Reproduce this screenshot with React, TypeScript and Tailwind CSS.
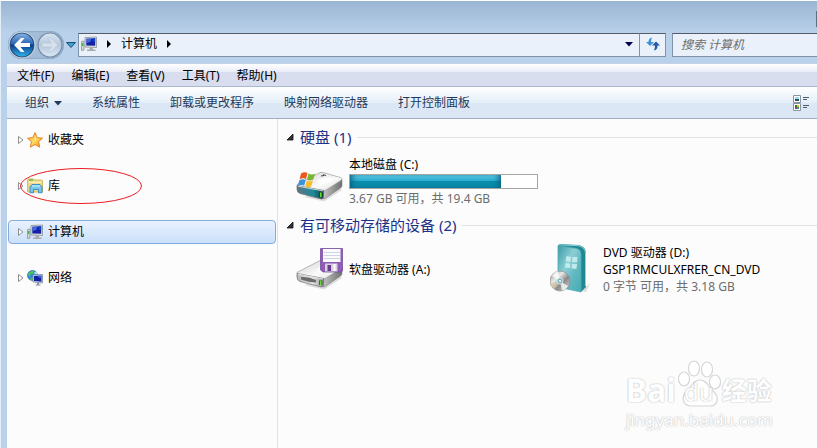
import type { ReactNode } from 'react';

const CARET = 'h-2 w-2 shrink-0';

function DownCaret({ color = '#1e395b' }: { color?: string }) {
  return (
    <svg viewBox="0 0 8 8" className={CARET} aria-hidden="true">
      <path d="M0 2h8L4 6.500z" fill={color} />
    </svg>
  );
}

function RightCaret() {
  return (
    <svg viewBox="0 0 8 8" className={CARET} aria-hidden="true">
      <path d="M2 0v8l4-4z" fill="#000" />
    </svg>
  );
}

function ComputerIcon() {
  return (
    <svg viewBox="0 0 16 16" className="h-4 w-4 shrink-0" aria-hidden="true">
      <path d="M.5 5.500 3 5v9l-2.500.5z" fill="#d4d8da" stroke="#8b9296" strokeWidth=".8" />
      <path d="M1.700 7v3" stroke="#35b233" strokeWidth="1.200" />
      <path d="M4 1.500 15.500 1v10.500L4 11z" fill="#dfe2e4" stroke="#92989d" strokeWidth=".9" />
      <path d="M5.300 2.700 14.200 2.200v7.600L5.300 9.400z" fill="#1421a6" />
      <path d="m5.300 2.700 5-.3-1 3.600-4 1z" fill="#4467dd" />
      <path d="M11.500 2.300h2.700v4L11.500 5z" fill="#0b44ce" />
      <path d="M8.500 11.500h3.500v2h2.500v1.500H6v-1.500h2.500z" fill="#a7abae" />
    </svg>
  );
}

function StarIcon() {
  return (
    <svg viewBox="0 0 16 16" className="h-4 w-4 shrink-0" aria-hidden="true">
      <defs>
        <linearGradient id="star" x1="0" y1="0" x2="1" y2="1">
          <stop offset="0" stopColor="#ffa52e" />
          <stop offset=".5" stopColor="#ffdb66" />
          <stop offset="1" stopColor="#f28a13" />
        </linearGradient>
      </defs>
      <path d="m8 .6 2.200 5 5.300.6-3.900 3.500 1.200 5.500L8 12.500 3.300 15.200l1.200-5.500L.5 6.200l5.300-.6z" fill="url(#star)" stroke="#e27a17" strokeWidth=".9" strokeLinejoin="round" />
      <path d="m8 3.500 1.300 3.200L8 9z" fill="#fff2b0" />
    </svg>
  );
}

function LibraryIcon() {
  return (
    <svg viewBox="0 0 16 16" className="h-4 w-4 shrink-0" aria-hidden="true">
      <path d="M.6 14V1.800L1.500 1h5l1 1h7l1 1v11z" fill="#f0da86" stroke="#cdb355" strokeWidth=".9" />
      <path d="M2 2h4" stroke="#4bb946" strokeWidth="1.200" />
      <path d="M1.500 4.300h13" stroke="#fff6cd" />
      <path d="M3 14.800V9l2-2.500h8L15 9v5.800h-3.500V11.500h-5v3.300z" fill="#76c6ed" stroke="#318bc3" strokeWidth=".9" />
      <path d="M5 8h8" stroke="#d6f3ff" />
    </svg>
  );
}

function NetworkIcon() {
  return (
    <svg viewBox="0 0 16 16" className="h-4 w-4 shrink-0" aria-hidden="true">
      <circle cx="5.500" cy="5.500" r="5" fill="#2c8fd8" stroke="#2a70ad" strokeWidth=".7" />
      <path d="M1 4.500C2 1.500 5 .5 7.500 1L6 3.500 3.500 4 3 7zM3 8l3 .5V10.500C4.500 10.500 3 9.500 3 8z" fill="#56c544" />
      <path d="M7 2.500 9.500 2l1 2h-3z" fill="#b8e8f9" />
      <path d="M6 5 15.500 4.500v8.500L6 12z" fill="#dde5ed" stroke="#77879d" strokeWidth=".8" />
      <path d="m7 6 7.500-.5v6.200L7 11z" fill="#1420a5" />
      <path d="M11 5.800h3.500v2.800L11 7z" fill="#3c66de" />
      <path d="M10 13h2v1.500h1.500v1H8.500v-1H10z" fill="#88949d" />
    </svg>
  );
}

function DriveBody({ tone }: { tone: 'teal' | 'grey' }) {
  const teal = tone === 'teal';
  return (
    <>
      <defs>
        <linearGradient id={`side-${tone}`} x1="0" y1="0" x2="1" y2="0">
          <stop offset="0" stopColor="#c4c4c4" />
          <stop offset=".4" stopColor="#a2a2a2" />
          <stop offset="1" stopColor="#6f6f6f" />
        </linearGradient>
        <linearGradient id={`front-${tone}`} x1="0" y1="0" x2="1" y2="0">
          <stop offset="0" stopColor={teal ? '#5d7580' : '#b5b5b5'} />
          <stop offset=".6" stopColor={teal ? '#1f8b9b' : '#e6e6e6'} />
          <stop offset="1" stopColor={teal ? '#123e46' : '#8f8f8f'} />
        </linearGradient>
        <linearGradient id={`top-${tone}`} x1="0" y1="0" x2="1" y2="1">
          <stop offset="0" stopColor="#d2d2d2" />
          <stop offset=".6" stopColor="#fafafa" />
          <stop offset="1" stopColor="#dedede" />
        </linearGradient>
      </defs>
      <path d="M8 37 28 41.500 46 30l-2-3z" fill="#000" opacity=".12" />
      <path d="M28 30.500 46 19.500v6q0 1.500-1.500 2.500L29 38.500l-2 .5z" fill={`url(#side-${tone})`} stroke="#808080" strokeWidth=".6" />
      <path d="M1 24.500 23 13q2-1 4-.5l17.500 5q2 .7 1 2.500L30 30q-1.500 1-3.500.5L2 26q-1.500-.5-1-1.500z" fill={`url(#top-${tone})`} stroke="#9d9d9d" strokeWidth=".7" />
      <path d="M20 22q9-7 18-3-7 6-14 5z" fill="#fff" opacity=".8" />
      <path d="M1 25.500 27.500 30.500v6q0 2.500-2 2.500L4 33.500Q1 32.500 1 29z" fill={`url(#front-${tone})`} stroke="#6f6f6f" strokeWidth=".7" />
      <path d="m2 26.200 25 4.700" stroke="#f4f4f4" strokeWidth=".8" />
      <path d="M24.800 32.500v4.500" stroke="#243a1c" strokeWidth="3" />
      <path d="M24.800 32.500v4.500" stroke="#62e02f" strokeWidth="1.600" />
    </>
  );
}

function HardDiskIcon() {
  return (
    <svg viewBox="0 0 48 42" className="h-[42px] w-12" aria-hidden="true">
      <DriveBody tone="teal" />
      <path d="m25 16 3-.5M27 14.700l3 .8" stroke="#444" />
      <path d="M5 13.500q3.500-2 6.500-.5l-1.500 6q-3.500-1.500-6.500.5z" fill="#e9581f" />
      <path d="M12.500 13.500q3 2 6.500.3l-1.700 5.800q-3 1.700-6.300-.1z" fill="#7ab52f" />
      <path d="M3.200 20.500q3-2 6.500-.5l-1.500 5.500Q5 24.300 1.700 26z" fill="#3b94da" />
      <path d="M10.800 20.500q3 1.700 6.200 0l-1.700 5.800q-3 1.700-6 0z" fill="#fbbd2b" />
    </svg>
  );
}

function FloppyIcon() {
  return (
    <svg viewBox="0 0 48 42" className="h-[42px] w-12" aria-hidden="true">
      <DriveBody tone="grey" />
      <path d="M5 29q8-.5 15 3v2.500Q13 34.500 5 31.500z" fill="#6b6b6b" />
      <path d="M24.500 .5h22V23l-1.500 1H27l-2.500-2z" fill="#8f5cb8" stroke="#6c4494" strokeWidth=".7" />
      <path d="M27 1h17.500v13H27z" fill="#fbfbff" />
      <path d="M27.500 4.500h16.500M27.500 7.500h16.500M27.500 10.500h16.500" stroke="#c5c9da" strokeWidth=".8" />
      <path d="M29 15.500h12.500V23.500H29z" fill="#d7d1de" />
      <path d="M31.500 17h3.500v6h-3.500z" fill="#6a3d90" />
      <path d="M38.500 16v7" stroke="#fff" strokeWidth="2" />
    </svg>
  );
}

function DvdIcon() {
  return (
    <svg viewBox="0 0 40 50" className="h-[50px] w-10" aria-hidden="true">
      <defs>
        <linearGradient id="case" x1="0" y1="0" x2="1" y2="1">
          <stop offset="0" stopColor="#3b9aa8" />
          <stop offset=".4" stopColor="#8bcfd5" />
          <stop offset=".65" stopColor="#62b9c1" />
          <stop offset="1" stopColor="#45abb3" />
        </linearGradient>
        <linearGradient id="disc" x1="0" y1="0" x2="1" y2="1">
          <stop offset="0" stopColor="#8d8d8d" />
          <stop offset=".35" stopColor="#e9e9e9" />
          <stop offset=".6" stopColor="#8a8a8a" />
          <stop offset="1" stopColor="#dcdcdc" />
        </linearGradient>
      </defs>
      <path d="m32 47 8-8-4 9z" fill="#bbb" opacity=".5" />
      <path d="m9 0 20 1q7 2 7 8v34l-5 5V9L8 3z" fill="#1e8792" />
      <path d="m8 1.500 19 3q4 1 4 6V48L8 43z" fill="url(#case)" stroke="#4ba9b4" strokeWidth=".8" />
      <path d="m9 .8 20 1q6 2 6.500 7V42" fill="none" stroke="#8fd2d9" />
      <path d="m16.500 12 4.500 1-.5 5-5-.5zM22.500 13h5l-.5 5.500-5-.3zM15.500 19l5 .5-.5 4.500-5-.5zM22 19.800l5 .3-.5 5-5-.5z" fill="#c9eef1" opacity=".9" />
      <circle cx="10" cy="37" r="10" fill="url(#disc)" stroke="#8c8c8c" strokeWidth=".7" />
      <path d="m10 37-8-5q2-4 6-5z" fill="#fff" opacity=".75" />
      <path d="m10 37 8 5q-2 4-6 4.500z" fill="#fff" opacity=".75" />
      <path d="m10 37-9.500 2q1 5 4 6.500z" fill="#d9c9a4" opacity=".6" />
      <circle cx="10" cy="37" r="3" fill="#6dbac3" stroke="#ddd" />
      <circle cx="10" cy="37" r="1" fill="#fff" />
    </svg>
  );
}

function HistoryButtons() {
  return (
    <div className="flex h-7 items-center rounded-full bg-[#a3bdd8] shadow-[inset_0_0_2px_#63809f]">
      <button aria-label="后退" className="flex h-7 w-7 items-center justify-center">
        <svg viewBox="0 0 28 28" className="h-7 w-7" aria-hidden="true">
          <defs>
            <linearGradient id="back" x1="0" y1="0" x2="0" y2="1">
              <stop offset="0" stopColor="#8ab5e4" />
              <stop offset=".45" stopColor="#2c66b5" />
              <stop offset=".5" stopColor="#0b3a8c" />
              <stop offset="1" stopColor="#31b7ed" />
            </linearGradient>
          </defs>
          <circle cx="14" cy="14" r="12" fill="url(#back)" stroke="#2b4a78" strokeWidth="1.200" />
          <circle cx="14" cy="14" r="13" fill="none" stroke="#dbe8f5" strokeWidth=".7" />
          <path d="m6 14 7-7h3.500l-4 5H22v4h-9.500l4 5H13z" fill="#fff" />
        </svg>
      </button>
      <button aria-label="前进" className="flex h-7 w-7 items-center justify-center">
        <svg viewBox="0 0 28 28" className="h-7 w-7" aria-hidden="true">
          <defs>
            <linearGradient id="forward" x1="0" y1="0" x2="0" y2="1">
              <stop offset="0" stopColor="#dae6f2" />
              <stop offset=".5" stopColor="#b5c8dc" />
              <stop offset="1" stopColor="#dbe8f5" />
            </linearGradient>
          </defs>
          <circle cx="14" cy="14" r="12" fill="url(#forward)" stroke="#758ba5" strokeWidth="1.200" />
          <path d="m22 14-7-7h-3.500l4 5H6v4h9.500l-4 5H15z" fill="#d5e0ec" stroke="#b4c5d7" strokeWidth=".6" />
        </svg>
      </button>
    </div>
  );
}

const FIELD = 'flex h-6 items-center border border-[#8193a8] border-t-[#545c6a] bg-[#eaf1fa] pb-0.5';

function NavigationBar() {
  return (
    <div className="flex h-9 items-center pl-px">
      <HistoryButtons />
      <button aria-label="最近浏览的位置" className="flex h-6 w-3.5 items-center justify-center">
        <svg viewBox="0 0 10 6" className="h-1.5 w-2.5" aria-hidden="true">
          <path d="M.5.500h9L5 5.500z" fill="#3ba2cf" stroke="#1c4d79" />
        </svg>
      </button>
      <nav aria-label="地址" className={`${FIELD} min-w-0 flex-1 gap-2 pl-0.5`}>
        <ComputerIcon />
        <RightCaret />
        <button className="whitespace-nowrap">计算机</button>
        <RightCaret />
        <button aria-label="以前的位置" className="mr-1.5 ml-auto">
          <DownCaret color="#00004c" />
        </button>
      </nav>
      <button aria-label="刷新" className={`${FIELD} w-[26px] justify-center border-l-0`}>
        <svg viewBox="0 0 16 14" className="h-3.5 w-4" aria-hidden="true">
          <path d="M7 .5Q3.500 1 3.500 5H1l4 4 4-4H6q0-3 1-4.500z" fill="#3c94d8" />
          <path d="M9 13.500q3.500-.5 3.500-5H15l-4-4-4 4h3q0 3-1 5z" fill="#2358ac" />
        </svg>
      </button>
      <input
        type="search"
        aria-label="搜索 计算机"
        placeholder="搜索 计算机"
        className={`${FIELD} ml-1.5 w-[145px] border-r-0 pl-2 italic outline-none placeholder:text-[#6d6d6d]`}
      />
    </div>
  );
}

const MENUS = ['文件(F)', '编辑(E)', '查看(V)', '工具(T)', '帮助(H)'];
const COMMANDS = ['系统属性', '卸载或更改程序', '映射网络驱动器', '打开控制面板'];

function Toolbar() {
  return (
    <div className="flex h-8 items-center gap-[30px] border-b border-[#a0afc3] bg-linear-to-b from-white from-0% via-[#e5eff9] via-50% to-[#dce7f5] to-50% pr-2 pl-[18px] whitespace-nowrap text-[#1e395b]">
      <button className="flex items-center gap-[5px]">
        组织
        <DownCaret />
      </button>
      {COMMANDS.map((name) => (
        <button key={name}>{name}</button>
      ))}
      <button aria-label="更改您的视图" className="ml-auto">
        <svg viewBox="0 0 16 16" className="h-4 w-4" aria-hidden="true">
          <path d="M.5.500h7v7h-7zM.5 8.500h7v7h-7z" fill="#fff" stroke="#8994a3" />
          <path d="M2 2h4v2H2z" fill="#9edaf0" />
          <path d="M2 4h4v2H2z" fill="#24565a" />
          <path d="M2 10h2v2H2z" fill="#397c37" />
          <path d="M4 10h2v2H4z" fill="#dfb532" />
          <path d="M2 12h2v2H2z" fill="#793b9c" />
          <path d="M4 12h2v2H4z" fill="#37a83e" />
          <path d="M10 2.500h6M10 4.500h4M10 10.500h6M10 12.500h4" stroke="#4b5c72" />
        </svg>
      </button>
    </div>
  );
}

const PLACES: { name: string; icon: ReactNode; selected?: boolean; circled?: boolean }[] = [
  { name: '收藏夹', icon: <StarIcon /> },
  { name: '库', icon: <LibraryIcon />, circled: true },
  { name: '计算机', icon: <ComputerIcon />, selected: true },
  { name: '网络', icon: <NetworkIcon /> },
];

function Sidebar() {
  return (
    <nav aria-label="导航窗格" className="w-[271px] shrink-0 border-r border-[#d6e5f5] px-px pt-[9px]">
      <ul className="flex flex-col gap-[22px]">
        {PLACES.map(({ name, icon, selected, circled }) => (
          <li key={name} className="relative">
            <button
              aria-current={selected}
              className={`flex h-6 w-full items-center gap-[5px] rounded-sm border pl-2 ${
                selected ? 'border-[#84acdd] bg-linear-to-b from-[#e9f2fe] to-[#cbe0fc]' : 'border-transparent'
              }`}
            >
              <span className="flex items-center gap-0.5">
                <svg viewBox="0 0 8 10" className="h-2.5 w-2" aria-hidden="true">
                  <path d="M1.500 1.500v7L6 5z" fill="#fff" stroke="#909090" />
                </svg>
                {icon}
              </span>
              {name}
            </button>
            {circled && (
              <svg viewBox="0 0 122 36" className="pointer-events-none absolute -top-1.5 left-3 h-9 w-[122px]" aria-hidden="true">
                <ellipse cx="61" cy="18" rx="60.500" ry="17.500" fill="none" stroke="#ed1c24" />
              </svg>
            )}
          </li>
        ))}
      </ul>
    </nav>
  );
}

function Group({ title, children }: { title: string; children: ReactNode }) {
  return (
    <section>
      <h2 className="flex h-6 items-center gap-1.5 text-[15px] whitespace-nowrap text-[#1e3287]">
        <svg viewBox="0 0 8 8" className="h-2 w-2" aria-hidden="true">
          <path d="M7 1v6H1z" fill="#333" stroke="#111" strokeWidth=".8" />
        </svg>
        {title}
        <span className="h-px flex-1 bg-[#e2e2e2]" />
      </h2>
      <div className="grid grid-cols-[254px_1fr] items-center pl-[10px]">{children}</div>
    </section>
  );
}

function Device({ icon, children }: { icon: ReactNode; children: ReactNode }) {
  return (
    <div className="flex items-center gap-[5px] leading-[17px] whitespace-nowrap">
      <div className="flex w-12 shrink-0">{icon}</div>
      <div>{children}</div>
    </div>
  );
}

function Watermark() {
  return (
    <div
      aria-hidden="true"
      className="pointer-events-none absolute right-11 bottom-4 flex flex-col text-white [text-shadow:0_0_1px_#bbb,0_0_2px_#ccc]"
    >
      <div className="flex items-end text-[32px] leading-9 font-bold">
        <span>Bai</span>
        <span className="relative flex h-12 w-[46px] items-end justify-center">
          <svg viewBox="0 0 46 48" className="absolute inset-0 h-12 w-[46px]" aria-hidden="true">
            <g fill="#fff" stroke="#d6d6d6" strokeWidth="1.200">
              <ellipse cx="8" cy="19" rx="5.500" ry="7" />
              <ellipse cx="18" cy="8.500" rx="5.500" ry="7.500" />
              <ellipse cx="31" cy="9.500" rx="5.500" ry="7.500" />
              <ellipse cx="39" cy="22" rx="5.500" ry="7" />
              <path d="M24 20c-7 0-8 7-13 11-6 5-5 15 4 15h19c9 0 9-10 3-15-5-4-6-11-13-11z" />
            </g>
          </svg>
          <span className="relative text-[24px] leading-8 font-normal">du</span>
        </span>
        <span className="text-[25px]">经验</span>
      </div>
      <span className="text-[17px] leading-6">jingyan.baidu.com</span>
    </div>
  );
}

export default function App() {
  return (
    <div
      lang="zh-CN"
      className="relative flex min-h-screen flex-col overflow-hidden border-t border-white border-l border-l-[#e4eef8] bg-[#b9d1ea] bg-linear-to-b from-[#9ab5d3] from-0% to-[#b9d1ea] to-[32px] pl-1.5 font-['Noto_Sans','Noto_Sans_CJK_SC',sans-serif] text-[12px] text-black"
    >
      <header>
        <div className="flex h-[26px] items-end justify-end">
          <span className="h-4 w-px bg-[#5b6f87]" />
        </div>
        <NavigationBar />
        <div
          role="menubar"
          className="flex h-6 items-center gap-[17px] border-y border-t-[#c4d1e4] border-b-[#a9b9d2] bg-linear-to-b from-white from-0% via-[#e9edf7] via-35% to-[#d9deef] to-35% pt-0.5 pl-2.5 whitespace-nowrap"
        >
          {MENUS.map((name) => (
            <button key={name} role="menuitem">
              {name}
            </button>
          ))}
        </div>
        <Toolbar />
      </header>
      <div className="flex flex-1 bg-[#fcfcfc]">
        <Sidebar />
        <main className="min-w-0 flex-1 pt-1.5 pl-2">
          <Group title="硬盘 (1)">
            <Device icon={<HardDiskIcon />}>
              <div className="flex h-16 flex-col justify-center">
                <span>本地磁盘 (C:)</span>
                <span
                  role="meter"
                  aria-label="已用空间"
                  aria-valuenow={81}
                  aria-valuemin={0}
                  aria-valuemax={100}
                  className="my-px block h-[15px] w-[189px] border border-[#a5a5a5] bg-white"
                >
                  <span
                    className="block h-full bg-linear-to-b from-[#62d5ef] from-0% via-[#27a9cb] via-45% to-[#0a8dab] to-45% shadow-[inset_5px_0_6px_-3px_#075f7d,inset_-5px_0_6px_-3px_#075f7d]"
                    style={{ width: '81%' }}
                  />
                </span>
                <span className="text-[#6d6d6d]">3.67 GB 可用，共 19.4 GB</span>
              </div>
            </Device>
          </Group>
          <Group title="有可移动存储的设备 (2)">
            <Device icon={<FloppyIcon />}>软盘驱动器 (A:)</Device>
            <Device icon={<DvdIcon />}>
              <div className="flex h-16 flex-col justify-center">
                <span>DVD 驱动器 (D:)</span>
                <span>GSP1RMCULXFRER_CN_DVD</span>
                <span className="text-[#6d6d6d]">0 字节 可用，共 3.18 GB</span>
              </div>
            </Device>
          </Group>
        </main>
      </div>
      <Watermark />
    </div>
  );
}
